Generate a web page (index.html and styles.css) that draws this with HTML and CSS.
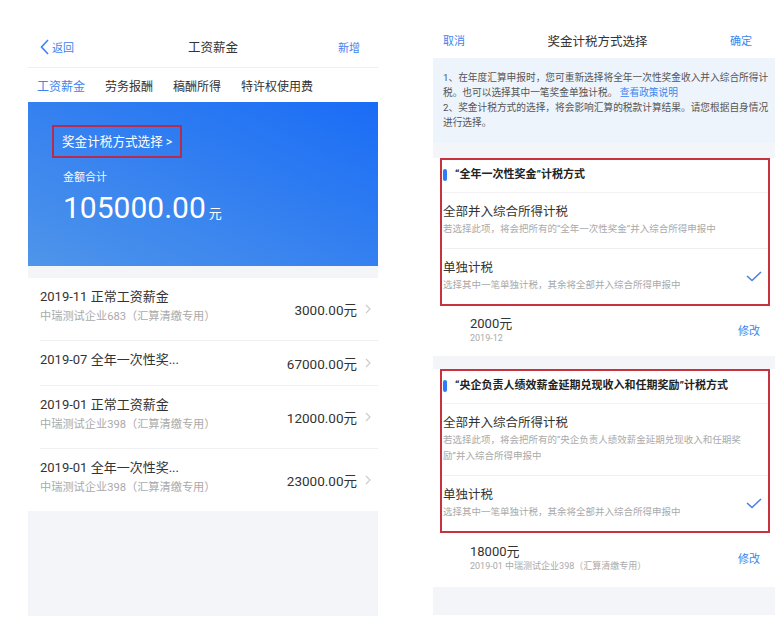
FILE: index.html
```html
<!DOCTYPE html>
<html lang="zh-CN">
<head>
  <meta charset="UTF-8">
  <title>工资薪金</title>
  <link rel="stylesheet" href="styles.css">
</head>
<body>
<div class="page">

  <!-- left: income list -->
  <div class="phone phone-left">
    <div class="navbar">
      <a class="nav-back">
        <svg width="9" height="16" viewBox="0 0 9 16"><path d="M8 1 L1.5 8 L8 15" fill="none" stroke="#3d84ee" stroke-width="1.6"/></svg>
        返回
      </a>
      <div class="nav-title">工资薪金</div>
      <a class="nav-link">新增</a>
    </div>
    <div class="tabs">
      <span class="tab tab-on">工资薪金</span>
      <span class="tab">劳务报酬</span>
      <span class="tab">稿酬所得</span>
      <span class="tab">特许权使用费</span>
    </div>
    <div class="hero">
      <div class="hero-link">奖金计税方式选择 &gt;</div>
      <div class="hero-label">金额合计</div>
      <div class="hero-sum">105000.00<span>元</span></div>
    </div>
    <div class="income-list">
      <div class="income-row">
        <div class="income-main">
          <div class="income-title">2019-11 正常工资薪金</div>
          <div class="income-sub">中瑞测试企业683（汇算清缴专用）</div>
        </div>
        <div class="income-amount">3000.00元</div>
        <svg class="chev" width="6" height="10" viewBox="0 0 6 10"><path d="M1 1 L5 5 L1 9" fill="none" stroke="#ccc" stroke-width="1.2"/></svg>
      </div>
      <div class="income-row">
        <div class="income-main">
          <div class="income-title">2019-07 全年一次性奖...</div>
        </div>
        <div class="income-amount">67000.00元</div>
        <svg class="chev" width="6" height="10" viewBox="0 0 6 10"><path d="M1 1 L5 5 L1 9" fill="none" stroke="#ccc" stroke-width="1.2"/></svg>
      </div>
      <div class="income-row">
        <div class="income-main">
          <div class="income-title">2019-01 正常工资薪金</div>
          <div class="income-sub">中瑞测试企业398（汇算清缴专用）</div>
        </div>
        <div class="income-amount">12000.00元</div>
        <svg class="chev" width="6" height="10" viewBox="0 0 6 10"><path d="M1 1 L5 5 L1 9" fill="none" stroke="#ccc" stroke-width="1.2"/></svg>
      </div>
      <div class="income-row">
        <div class="income-main">
          <div class="income-title">2019-01 全年一次性奖...</div>
          <div class="income-sub">中瑞测试企业398（汇算清缴专用）</div>
        </div>
        <div class="income-amount">23000.00元</div>
        <svg class="chev" width="6" height="10" viewBox="0 0 6 10"><path d="M1 1 L5 5 L1 9" fill="none" stroke="#ccc" stroke-width="1.2"/></svg>
      </div>
    </div>
  </div>

  <!-- right: bonus tax method -->
  <div class="phone phone-right">
    <div class="navbar navbar-right">
      <a class="nav-link">取消</a>
      <div class="nav-title">奖金计税方式选择</div>
      <a class="nav-link">确定</a>
    </div>
    <div class="notice">
      <p>1、在年度汇算申报时，您可重新选择将全年一次性奖金收入并入综合所得计税。也可以选择其中一笔奖金单独计税。 <span class="notice-link">查看政策说明</span></p>
      <p>2、奖金计税方式的选择，将会影响汇算的税款计算结果。请您根据自身情况进行选择。</p>
    </div>

    <div class="card">
      <div class="marked">
        <div class="sec-head"><i class="sec-bar"></i>“全年一次性奖金”计税方式</div>
        <div class="opt">
          <div class="opt-main">
            <div class="opt-title">全部并入综合所得计税</div>
            <div class="opt-sub">若选择此项，将会把所有的“全年一次性奖金”并入综合所得申报中</div>
          </div>
        </div>
        <div class="opt">
          <div class="opt-main">
            <div class="opt-title">单独计税</div>
            <div class="opt-sub">选择其中一笔单独计税，其余将全部并入综合所得申报中</div>
          </div>
          <svg class="check" width="16" height="11" viewBox="0 0 16 11"><path d="M1 5 L6 9.5 L15 1" fill="none" stroke="#4a80e2" stroke-width="1.6"/></svg>
        </div>
      </div>
      <div class="picked">
        <div>
          <div class="picked-sum">2000元</div>
          <div class="picked-sub">2019-12</div>
        </div>
        <a class="edit-link">修改</a>
      </div>
    </div>

    <div class="card">
      <div class="marked">
        <div class="sec-head"><i class="sec-bar"></i>“央企负责人绩效薪金延期兑现收入和任期奖励”计税方式</div>
        <div class="opt">
          <div class="opt-main">
            <div class="opt-title">全部并入综合所得计税</div>
            <div class="opt-sub">若选择此项，将会把所有的“央企负责人绩效薪金延期兑现收入和任期奖励”并入综合所得申报中</div>
          </div>
        </div>
        <div class="opt">
          <div class="opt-main">
            <div class="opt-title">单独计税</div>
            <div class="opt-sub">选择其中一笔单独计税，其余将全部并入综合所得申报中</div>
          </div>
          <svg class="check" width="16" height="11" viewBox="0 0 16 11"><path d="M1 5 L6 9.5 L15 1" fill="none" stroke="#4a80e2" stroke-width="1.6"/></svg>
        </div>
      </div>
      <div class="picked picked-last">
        <div>
          <div class="picked-sum">18000元</div>
          <div class="picked-sub">2019-01 中瑞测试企业398（汇算清缴专用）</div>
        </div>
        <a class="edit-link">修改</a>
      </div>
    </div>
  </div>

</div>
</body>
</html>
```

FILE: styles.css
```css
html, body {
  margin: 0;
  padding: 0;
  background-color: #fff;
}
body {
  font-family: Roboto, "Noto Sans CJK SC", sans-serif;
  color: #333;
}
p {
  margin: 0;
}
a {
  color: #3d84ee;
}

.page {
  display: flex;
  align-items: flex-start;
  gap: 55px;
  padding: 28px 0 0 28px;
}
.phone {
  background-color: #f4f5f8;
}
.phone-left {
  width: 350px;
  height: 588px;
}
.phone-right {
  width: 342px;
  height: 591px;
  margin-top: -4px;
}

/* top bar */
.navbar {
  display: flex;
  align-items: center;
  justify-content: space-between;
  height: 37px;
  padding: 0 18px 2px 12px;
  background-color: #fff;
  border-bottom: 1px solid #eeeff2;
}
.navbar-right {
  height: 32px;
  padding: 0 23px 2px 10px;
  border-bottom: 0;
}
.nav-back {
  display: flex;
  align-items: center;
  gap: 3px;
  font-size: 11px;
}
.nav-title {
  font-size: 12.5px;
  color: #333;
  padding-left: 14px;
}
.navbar-right .nav-title {
  padding-left: 0;
}
.nav-link {
  font-size: 11px;
}

/* tabs */
.tabs {
  display: flex;
  align-items: center;
  gap: 20px;
  height: 34px;
  padding-left: 9px;
  background-color: #fff;
  font-size: 12px;
  color: #333;
}
.tab-on {
  color: #3d84ee;
}

/* blue summary */
.hero {
  height: 164px;
  padding: 23px 24px 0;
  box-sizing: border-box;
  background: linear-gradient(to right top, #4f95ea, #1a6cf6);
  color: #fff;
}
.hero-link {
  display: inline-block;
  height: 33px;
  line-height: 29px;
  padding: 0 8px;
  box-sizing: border-box;
  border: 2px solid #b72c4c;
  font-size: 12.6px;
}
.hero-label {
  margin: 12px 0 0 11px;
  font-size: 11px;
  line-height: 16px;
  opacity: 0.95;
}
.hero-sum {
  margin: 4px 0 0 11px;
  font-size: 30px;
  line-height: 36px;
}
.hero-sum span {
  margin-left: 3px;
  font-size: 13px;
}

/* income list */
.income-list {
  margin-top: 12px;
  padding-left: 12px;
  background-color: #fff;
}
.income-row {
  display: flex;
  align-items: center;
  padding-right: 7px;
  border-bottom: 1px solid #f0f0f2;
}
.income-row:last-child {
  border-bottom: 0;
}
.income-main {
  flex: 1;
  padding: 9px 0 15px;
}
.income-title {
  font-size: 13px;
  line-height: 20px;
}
.income-sub {
  margin-top: 2px;
  font-size: 11.2px;
  line-height: 16px;
  color: #aaa;
}
.income-amount {
  font-size: 13.5px;
}
.chev {
  margin-left: 8px;
}

/* notice */
.notice {
  width: 330px;
  padding: 12px 2px 13px 10px;
  background-color: #edf4fc;
  font-size: 9.7px;
  line-height: 15px;
  color: #555;
}
.notice-link {
  color: #3d84ee;
}

/* option cards */
.card {
  margin-top: 13px;
  background-color: #fff;
}
.notice + .card {
  margin-top: 15px;
}
.marked {
  margin: 0 5px 0 7px;
  padding: 0 0 0 1px;
  border: 2px solid #c8323f;
}
.sec-head {
  display: flex;
  align-items: center;
  padding: 7px 0 10px;
  border-bottom: 1px solid #f2f2f4;
  font-size: 11px;
  line-height: 15px;
  font-weight: bold;
  color: #222;
}
.sec-bar {
  width: 4px;
  height: 12px;
  margin-right: 8px;
  border-radius: 2px;
  background-color: #2f7cf6;
}
.opt {
  display: flex;
  align-items: center;
  padding: 10px 0 11px;
  border-bottom: 1px solid #eeeff1;
}
.opt:last-child {
  border-bottom: 0;
}
.opt-main {
  flex: 1;
}
.opt-title {
  font-size: 12.5px;
  line-height: 18px;
}
.opt-sub {
  max-width: 302px;
  font-size: 9.5px;
  line-height: 16px;
  color: #aaa;
}
.check {
  margin: 0 6px 0 4px;
}
.picked {
  display: flex;
  align-items: center;
  justify-content: space-between;
  padding: 10px 15px 12px 37px;
}
.picked-last {
  padding: 11px 15px 15px 37px;
}
.picked-sum {
  font-size: 13px;
  line-height: 16px;
}
.picked-sub {
  font-size: 9px;
  line-height: 12px;
  color: #aaa;
}
.edit-link {
  font-size: 11px;
}
```
